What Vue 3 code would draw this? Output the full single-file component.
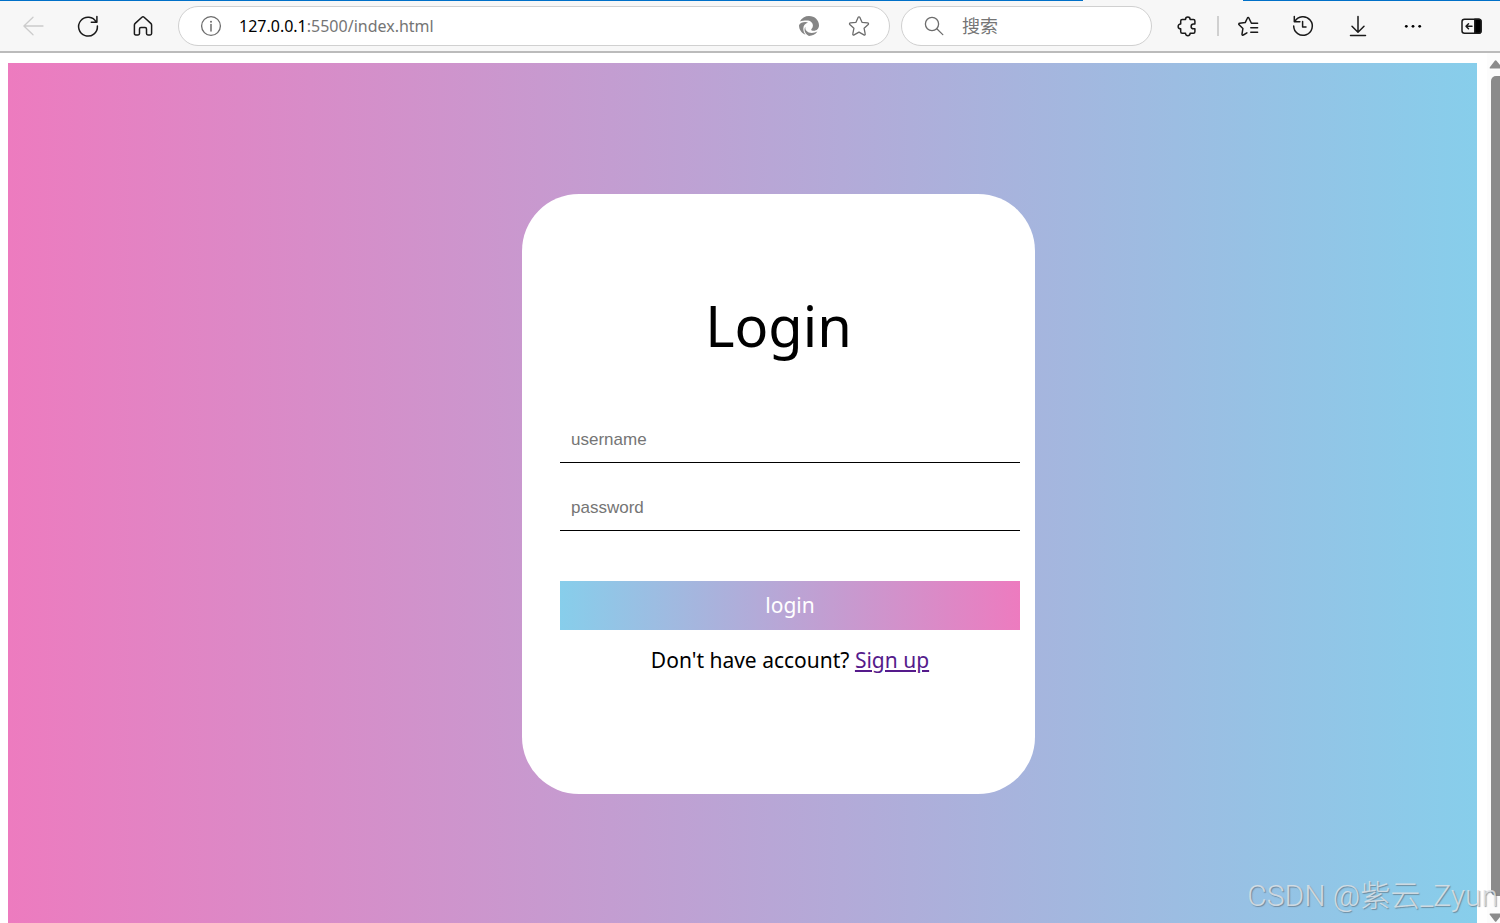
<template>
  <div class="browser">
    <div class="tab-strip">
      <div class="tab-line"></div>
      <div class="tab-active"></div>
      <div class="tab-line tab-line-end"></div>
    </div>

    <header class="toolbar">
      <button class="tool" type="button" aria-label="back" disabled>
        <svg viewBox="0 0 20 20" class="icon faded"><path d="M10 1.3 0.9 10l9.1 8.7M1 10h19" /></svg>
      </button>
      <button class="tool" type="button" aria-label="refresh">
        <svg viewBox="0 0 20 20" class="icon dark"><path d="M18.3 6.2A9.4 9.4 0 1 0 19.4 10M18.9 .4v5.8h-5.6" /></svg>
      </button>
      <button class="tool" type="button" aria-label="home">
        <svg viewBox="0 0 20 20" class="icon dark"><path d="M1.4 9.1c0-.7.3-1.2.8-1.7L8.900 1.3c.7-.6 1.5-.6 2.2 0l6.700 6.100c.5.5.8 1 .8 1.700v8.400c0 .9-.5 1.400-1.400 1.400h-2.300c-.9 0-1.400-.5-1.400-1.400v-4.600c0-.9-.5-1.400-1.400-1.400H7.900c-.9 0-1.400.5-1.400 1.400v4.600c0 .9-.5 1.400-1.400 1.400H2.800c-.9 0-1.400-.5-1.400-1.400z" /></svg>
      </button>

      <div class="pill address">
        <svg viewBox="0 0 20 20" class="icon gray">
          <circle cx="10" cy="10" r="9.4" />
          <path d="M10 8.5v6.5" stroke-width="1.5" />
          <circle cx="10" cy="5.8" r="1" class="solid" />
        </svg>
        <a class="url" href="#"><span class="host">127.0.0.1</span>:5500/index.html</a>
        <button class="tool" type="button" aria-label="swirl">
          <svg viewBox="0 0 20 20" class="icon swirl">
            <path d="M.8 5.600C2.600 2 6 0 10 0c5.800 0 10 4.300 10 9.300 0 3.300-2.300 5.500-5.300 5.500-1.600 0-2.500-.4-2.500-1 0-.7 1.700-1.600 1.700-4.200 0-3-2.500-5.100-6.200-5.100-2.500 0-4.900.3-6.900 1.100z" />
            <path d="M0 9.300C.9 7 3.500 6 6.300 6c1.100 0 2 .2 2.700.6-2.900 1-4.700 3.200-4.700 6.200 0 2.200.8 4.200 2.200 5.900C2.600 17.300 0 13.700 0 9.300z" />
            <path d="M6.400 10.800c-.6 3.500 1.900 6.100 6.300 6.100 2.100 0 4-.4 5.700-1.300-1.900 2.900-4.900 4.400-8.400 4.400-2.900-1.200-4.500-3.700-4.500-6.200 0-1.200.3-2.200.9-3z" />
          </svg>
        </button>
        <button class="tool" type="button" aria-label="favorite">
          <svg viewBox="0 0 20 20" class="icon gray"><path d="M9.200 1.300c.3-.7 1.300-.7 1.600 0l2.200 5 5.600.6c.9.1 1.200 1 .6 1.600l-4.100 3.800 1.100 5.600c.2.900-.6 1.400-1.300 1l-4.900-2.800-4.900 2.800c-.7.4-1.500-.1-1.300-1l1.100-5.600L.8 8.500c-.6-.6-.3-1.500.6-1.600L7 6.300z" /></svg>
        </button>
      </div>

      <div class="pill search">
        <svg viewBox="0 0 20 20" class="icon gray"><circle cx="8" cy="8" r="6.600" /><path d="m12.800 12.800 6 5.800" /></svg>
        <input v-model="keyword" type="text" aria-label="搜索" placeholder="搜索">
      </div>

      <div class="actions">
        <button class="tool" type="button" aria-label="extensions">
          <svg viewBox="0 0 20 20" class="icon dark"><path d="M8.500 3.500c0-3.200 4.600-3.200 4.600 0h3.300c1 0 1.500.5 1.500 1.500v3h-1.300c-3.300 0-3.300 4.800 0 4.800h1.300v3c0 1-.5 1.500-1.500 1.500h-3.300c0 3.200-4.600 3.200-4.600 0H5.200c-1 0-1.500-.5-1.500-1.500v-3c-3.400 0-3.400-4.800 0-4.800V5c0-1 .5-1.500 1.500-1.500z" /></svg>
        </button>
        <span class="separator"></span>
        <button class="tool" type="button" aria-label="favorites">
          <svg viewBox="0 0 20 20" class="icon dark"><path d="M19.600 7.300h-6.200L11 2.200c-.4-.9-1.300-.9-1.700 0L7.200 6.600l-5.600.7c-.9.100-1.100.9-.5 1.500l3.800 3.700-.9 5.600c-.1.900.6 1.400 1.300.9l3.600-2.100M12.800 11.800h6.800M12.800 16.300h6.800" /></svg>
        </button>
        <button class="tool" type="button" aria-label="history">
          <svg viewBox="0 0 20 20" class="icon dark"><path d="M1.900 5.400A9.300 9.300 0 1 1 .7 10M1.300 .6v5.200h5.600M9.600 5.600v5.400h3.400" /></svg>
        </button>
        <button class="tool" type="button" aria-label="downloads">
          <svg viewBox="0 0 20 20" class="icon dark"><path d="M10 .6v15.500M4 10.300l6 6 6-6M2.500 19.500h15" /></svg>
        </button>
        <button class="tool" type="button" aria-label="more">
          <svg viewBox="0 0 20 20" class="icon"><circle cx="3.300" cy="10.300" r="1.400" /><circle cx="10" cy="10.300" r="1.400" /><circle cx="16.700" cy="10.300" r="1.400" /></svg>
        </button>
        <button class="tool sidebar" type="button" aria-label="sidebar">
          <svg viewBox="0 0 20 20" class="icon dark"><rect x="1" y="3.200" width="19" height="14" rx="2.500" /><path class="solid" d="M13.800 3.200h4c1.400 0 2.200.9 2.200 2.200v9.600c0 1.300-.8 2.200-2.200 2.200h-4z" /><path d="M11 10.200H5M7.500 7.700 5 10.200l2.500 2.500" /></svg>
        </button>
      </div>
    </header>

    <div class="view">
      <main class="page">
        <div class="card">
          <h1>Login</h1>
          <form @submit.prevent>
            <input v-model="username" type="text" aria-label="username" placeholder="username">
            <input v-model="password" type="password" aria-label="password" placeholder="password">
            <button class="btn" type="submit">login</button>
            <p class="msg">Don't have account? <a href="#">Sign up</a></p>
          </form>
        </div>
      </main>
      <div class="scrollbar">
        <svg viewBox="0 0 13 10" class="arrow"><path d="M3 9.500c-.5-.3-.5-1 0-1.600l4.800-6.200c.5-.7 1.200-.7 1.700 0L13 6v3.500z" /></svg>
        <div class="thumb"></div>
        <svg viewBox="0 0 13 10" class="arrow"><path d="M3 .5c-.5.300-.5 1 0 1.600l4.800 6.200c.5.700 1.200.7 1.700 0L13 4V.5z" /></svg>
      </div>
    </div>

    <div class="watermark">CSDN @紫云_Zyun</div>
  </div>
</template>

<script setup>
import { ref } from 'vue'

const keyword = ref('')
const username = ref('')
const password = ref('')
</script>

<style>
body {
  margin: 0;
}
</style>

<style scoped>
* {
  box-sizing: border-box;
}
.browser {
  position: relative;
  display: flex;
  flex-direction: column;
  height: 100vh;
  overflow: hidden;
  background-color: #fff;
  font-family: "Noto Sans", "Noto Sans CJK SC", sans-serif;
}
.tab-strip {
  display: flex;
  height: 1px;
  background-color: #f7f7f7;
}
.tab-line {
  flex: 1;
  background-color: #0070c8;
}
.tab-active {
  width: 160px;
}
.tab-line-end {
  flex: none;
  width: 257px;
}
.toolbar {
  display: flex;
  align-items: center;
  gap: 15px;
  height: 52px;
  padding: 0 9px 0 13px;
  background-color: #f7f7f7;
  border-bottom: 2px solid #bbb;
}
.tool {
  display: flex;
  flex: none;
  align-items: center;
  justify-content: center;
  width: 40px;
  height: 40px;
  padding: 0;
  border: none;
  background: none;
}
.icon {
  flex: none;
  width: 20px;
  height: 20px;
  overflow: visible;
}
.faded,
.gray,
.dark {
  fill: none;
  stroke: #1a1a1a;
  stroke-width: 1.5;
  stroke-linecap: round;
  stroke-linejoin: round;
}
.faded {
  stroke: #ccc;
  stroke-width: 1.3;
}
.gray {
  stroke: #6c6c6c;
  stroke-width: 1.3;
}
.gray .solid {
  fill: #6c6c6c;
  stroke: none;
}
.dark .solid {
  fill: #000;
}
.swirl {
  fill: #858585;
}
.pill {
  display: flex;
  align-items: center;
  height: 40px;
  border: 1px solid #d0d0d0;
  border-radius: 20px;
  background-color: #fff;
}
.address {
  flex: 1;
  gap: 10px;
  padding: 0 10px 0 22px;
}
.url {
  flex: 1;
  margin-left: 8px;
  color: #757575;
  font-size: 16px;
  text-decoration: none;
  white-space: nowrap;
}
.host {
  color: #000;
}
.search {
  width: 251px;
  gap: 18px;
  margin-left: -4px;
  padding: 0 22px;
}
.search input {
  width: 100%;
  height: 24px;
  padding: 0 0 2px;
  border: none;
  outline: none;
  background: none;
  font-family: "Noto Sans CJK SC", sans-serif;
  font-size: 18px;
}
.search input::placeholder {
  color: #757575;
}
.actions {
  display: flex;
  align-items: center;
  gap: 15px;
}
.separator {
  width: 2px;
  height: 20px;
  margin: 0 -6px 0 -5px;
  background-color: #d0d0d0;
}
.sidebar {
  margin-left: 3px;
}
.view {
  display: flex;
  flex: 1;
  min-height: 0;
}
.page {
  display: flex;
  flex: 1;
  align-items: flex-start;
  justify-content: center;
  margin: 10px 10px 0 8px;
  padding: 131px 0 0 72px;
  background-image: linear-gradient(to right, #ed7bbf, skyblue);
}
.card {
  width: 513px;
  height: 600px;
  border-radius: 57px;
  background-color: #fff;
}
h1 {
  margin: 92px 0 0;
  font-size: 56px;
  font-weight: 400;
  line-height: 78px;
  text-align: center;
}
form {
  display: flex;
  flex-direction: column;
  padding: 51px 15px 0 38px;
}
form input {
  height: 48px;
  margin-bottom: 20px;
  padding: 2px 11px 0;
  border: none;
  border-bottom: 1px solid #000;
  outline: none;
  font-family: "Liberation Sans", Arial, sans-serif;
  font-size: 17px;
}
form input::placeholder {
  color: #757575;
}
.btn {
  height: 49px;
  margin-top: 30px;
  padding: 0 0 2px;
  border: none;
  background-image: linear-gradient(to right, skyblue, #ed7bbf);
  color: #fff;
  font-family: inherit;
  font-size: 21px;
}
.msg {
  margin: 15px 0 0;
  font-size: 21px;
  line-height: 30px;
  text-align: center;
}
.msg a {
  color: #551a8b;
}
.scrollbar {
  display: flex;
  flex-direction: column;
  align-items: flex-end;
  gap: 7px;
  width: 13px;
  padding-top: 6px;
  background-color: #fcfcfc;
}
.arrow {
  flex: none;
  width: 13px;
  height: 10px;
  fill: #8b8b8b;
}
.thumb {
  flex: 1;
  width: 9px;
  margin-bottom: 10px;
  border-radius: 5px 0 0 5px;
  background-color: #8b8b8b;
}
.watermark {
  position: absolute;
  right: 2px;
  bottom: 5px;
  color: rgba(222, 226, 230, 0.85);
  font-family: Roboto, "Noto Sans CJK SC", sans-serif;
  font-size: 30px;
  font-weight: 300;
  line-height: 44px;
  text-shadow: 1px 1px 1px rgba(90, 100, 110, 0.6);
}
</style>
